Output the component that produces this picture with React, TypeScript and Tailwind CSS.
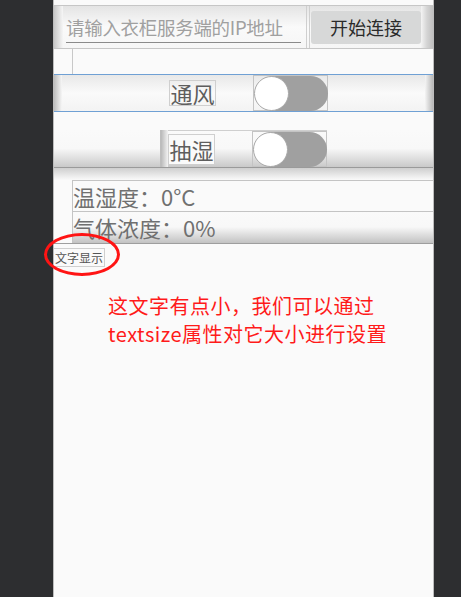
import React from "react";

const cjk = { fontFamily: '"Noto Sans CJK SC", "Noto Sans", sans-serif' };

function Switch() {
  return (
    <div className="relative h-[36px] w-[75px] border border-[#c4c4c4] border-b-dashed">
      <div className="absolute left-[17px] top-0 h-[35px] w-[57px] rounded-r-[18px] bg-[#a0a0a0]" />
      <div className="absolute left-0 top-0 h-[35px] w-[35px] rounded-full border border-[#a8a8a8] bg-white" />
    </div>
  );
}

export default function App() {
  return (
    <div className="flex h-[597px] w-[461px] bg-[#2d2e30]" style={cjk}>
      <div className="w-[53px] shrink-0" />
      <div className="flex h-[597px] w-[380px] shrink-0 flex-col border-l border-[#bdbdbd] bg-[#fafafa]">
        {/* top strip */}
        <div className="h-[5px] bg-[#fafafa]" />
        {/* row 1 */}
        <div className="flex h-[44px] border-y border-[#c6c6c6] bg-linear-to-b from-[#e4e4e4] via-[#fafafa] to-[#f6f6f6]">
          <div className="w-[9px] bg-linear-to-r from-[#c8c8c8] to-[#f6f6f6]" />
          <div className="flex w-[244px] flex-col justify-end pb-[5px] pl-[3px] border-r border-[#cfcfcf]">
            <div className="w-[235px] border-b border-[#8a8a8a] pb-[1px] text-[18.5px] leading-[28px] tracking-[-0.3px] text-[#a0a0a0] whitespace-nowrap">
              请输入衣柜服务端的IP地址
            </div>
          </div>
          <div className="ml-[2px] border-l border-[#cfcfcf]" />
          <div className="flex items-center pl-[1px]">
            <div className="flex h-[33px] w-[110px] items-center justify-center rounded-[3px] bg-[#d7d8d8] text-[18px] text-[#2a2a2a]">
              开始连接
            </div>
          </div>
          <div className="ml-auto w-[12px] bg-linear-to-r from-[#f4f4f4] via-[#d4d4d4] to-[#c0c0c0]" />
        </div>
        {/* spacer row */}
        <div className="h-[25px] pl-[18px]">
          <div className="h-full border-l border-[#c8c8c8]" />
        </div>
        {/* row 2 */}
        <div className="flex h-[38px] items-stretch border-y border-[#6fa0d4] bg-linear-to-b from-[#e8e8e8] via-[#fafafa] to-[#f3f3f3]">
          <div className="w-[8px] bg-linear-to-r from-[#bdbdbd] to-[#f6f6f6]" />
          <div className="flex flex-1 items-center pl-[107px]">
            <div className="flex h-[26px] w-[47px] items-center justify-center border border-[#cfcfcf] text-[22px] leading-[26px] text-[#5e5e5e]">
              通风
            </div>
            <div className="ml-[37px] self-start">
              <Switch />
            </div>
          </div>
          <div className="w-[8px] bg-linear-to-r from-[#f4f4f4] to-[#b8b8b8]" />
        </div>
        {/* row 3 */}
        <div className="h-[18px]" />
        <div className="relative flex h-[37px] items-stretch bg-linear-to-b from-[#fafafa] via-[#f8f8f8] to-[#c9c9c9]">
          <div className="flex pl-[106px]">
            <div className="w-[8px] bg-linear-to-r from-[#b9b9b9] to-[#f2f2f2] border-l border-[#bdbdbd]" />
            <div className="flex items-center border-t border-[#cfcfcf]">
              <div className="flex h-[31px] w-[47px] items-center justify-center border border-[#cfcfcf] bg-[#fafafa] text-[22px] leading-[26px] text-[#5e5e5e]">
                抽湿
              </div>
              <div className="ml-[37px] self-start">
                <Switch />
              </div>
            </div>
          </div>
        </div>
        <div className="h-[1px] bg-[#9a9a9a]" />
        <div className="h-[12px] bg-linear-to-b from-[#cfcfcf] to-[#fafafa]" />
        {/* row 4 */}
        <div className="relative pl-[18px]">
          <div className="flex h-[32px] items-center border border-[#c4c4c4] border-r-0 text-[22px] leading-[30px] text-[#707070] whitespace-nowrap">
            温湿度：0°C
          </div>
          <div className="flex h-[31px] items-center border-l border-b border-[#c4c4c4] bg-linear-to-b from-[#fafafa] via-[#f8f8f8] to-[#c6c6c6] text-[22px] leading-[30px] text-[#707070] whitespace-nowrap">
            气体浓度：0%
          </div>
        </div>
        <div className="h-[1px] bg-[#9e9e9e]" />
        {/* small text */}
        <div className="relative">
          <div className="inline-flex h-[19px] items-center border border-[#cfcfcf] border-l-0 px-[1px] text-[12px] leading-[17px] text-[#555]">
            文字显示
          </div>
          <div className="pointer-events-none absolute left-[-10px] top-[-11px] h-[43px] w-[76px] rounded-[50%] border-[3px] border-[#ff1414]" />
        </div>
        <div className="mt-[24px] pl-[54px] text-[20px] leading-[28px] tracking-[0.5px] text-[#ff1a1a]">
          <div>这文字有点小，我们可以通过</div>
          <div>textsize属性对它大小进行设置</div>
        </div>
      </div>
      <div className="flex-1 border-l border-[#bdbdbd]" />
    </div>
  );
}
